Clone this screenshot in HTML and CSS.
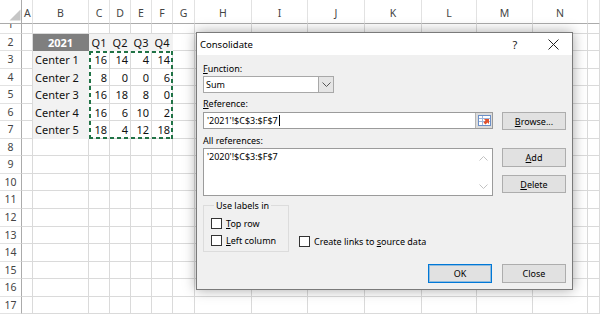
FILE: index.html
```html
<!DOCTYPE html>
<html lang="en">
<head>
    <meta charset="UTF-8">
    <meta name="viewport" content="width=device-width, initial-scale=1.0">
    <title>Consolidate</title>
    <link rel="stylesheet" href="styles.css">
</head>
<body>
    <div class="sheet" id="sheet">
        <!-- Cells are added by JavaScript -->
    </div>

    <div class="dialog">
        <div class="dlg-title">
            <span class="dlg-name">Consolidate</span>
            <span class="tb-btn">?</span>
            <span class="tb-btn">
                <svg width="11" height="11" viewBox="0 0 11 11"><path d="M0.5 0.5L10.5 10.5M10.5 0.5L0.5 10.5" stroke="#222" stroke-width="1" fill="none"/></svg>
            </span>
        </div>

        <div class="dlg-body">
            <div class="lbl lbl-first"><u>F</u>unction:</div>
            <div class="select">
                <span class="select-val">Sum</span>
                <span class="select-btn">
                    <svg width="9" height="5" viewBox="0 0 9 5"><path d="M0.5 0.5L4.5 4.5L8.5 0.5" stroke="#555" fill="none"/></svg>
                </span>
            </div>

            <div class="lbl lbl-ref"><u>R</u>eference:</div>
            <div class="dlg-row">
                <div class="input">
                    <span>'2021'!$C$3:$F$7</span><span class="caret"></span>
                    <span class="picker">
                        <svg width="13" height="11" viewBox="0 0 13 11">
                            <rect x="0.5" y="0.5" width="12" height="10" fill="#fff" stroke="#6b8fc7"/>
                            <path d="M1 3.5H12M1 6.5H12M4.5 1V10" stroke="#9db5dc" fill="none"/>
                            <path d="M6 4H11V9L9.5 7.5L7.5 9.5L5.5 7.5L7.5 5.5Z" fill="#e0502c"/>
                        </svg>
                    </span>
                </div>
                <button class="btn btn-browse"><u>B</u>rowse...</button>
            </div>

            <div class="lbl lbl-all">All references:</div>
            <div class="dlg-row row-refs">
                <div class="listbox">
                    <span class="list-item">'2020'!$C$3:$F$7</span>
                    <div class="scroll">
                        <svg width="9" height="5" viewBox="0 0 9 5"><path d="M0.5 4.5L4.5 0.5L8.5 4.5" stroke="#c2c2c2" fill="none"/></svg>
                        <svg width="9" height="5" viewBox="0 0 9 5"><path d="M0.5 0.5L4.5 4.5L8.5 0.5" stroke="#c2c2c2" fill="none"/></svg>
                    </div>
                </div>
                <div class="btn-col">
                    <button class="btn"><u>A</u>dd</button>
                    <button class="btn btn-delete"><u>D</u>elete</button>
                </div>
            </div>

            <div class="dlg-row row-opts">
                <fieldset class="group">
                    <legend>Use labels in</legend>
                    <label class="check"><span class="box"></span><span><u>T</u>op row</span></label>
                    <label class="check"><span class="box"></span><span><u>L</u>eft column</span></label>
                </fieldset>
                <label class="check check-links"><span class="box"></span><span>Create links to <u>s</u>ource data</span></label>
            </div>

            <div class="dlg-row row-foot">
                <button class="btn btn-ok">OK</button>
                <button class="btn">Close</button>
            </div>
        </div>
    </div>

    <script>
        // Sheet data, columns A..F
        const sheetData = {
            2: ['', '2021', 'Q1', 'Q2', 'Q3', 'Q4'],
            3: ['', 'Center 1', 16, 14, 4, 14],
            4: ['', 'Center 2', 8, 0, 0, 6],
            5: ['', 'Center 3', 16, 18, 8, 0],
            6: ['', 'Center 4', 16, 6, 10, 2],
            7: ['', 'Center 5', 18, 4, 12, 18]
        };
        const colNames = ['A', 'B', 'C', 'D', 'E', 'F', 'G', 'H', 'I', 'J', 'K', 'L', 'M', 'N', ''];

        const sheet = document.getElementById('sheet');

        function addCell(text, cls) {
            const cell = document.createElement('div');
            cell.className = 'cell ' + cls;
            const inner = document.createElement('span');
            inner.textContent = text;
            cell.appendChild(inner);
            sheet.appendChild(cell);
            return cell;
        }

        // Corner with select-all triangle
        const corner = document.createElement('div');
        corner.className = 'cell corner';
        corner.innerHTML = '<svg width="22" height="24" viewBox="0 0 22 24"><polygon points="20.5,9.5 20.5,20.5 9.5,20.5" fill="#c6c6c6"/></svg>';
        sheet.appendChild(corner);

        colNames.forEach(name => addCell(name, 'col-hd'));

        for (let r = 1; r <= 17; r++) {
            addCell(r, 'row-hd' + (r === 1 ? ' r1' : ''));
            colNames.forEach((name, c) => {
                const row = sheetData[r];
                const text = row && c < row.length ? row[c] : '';
                let cls = r === 1 ? 'r1' : '';
                if (r === 2 && c === 1) cls = 'yr';
                else if (r === 2 && c >= 2 && c <= 5) cls = 'q';
                else if (row && c === 1) cls = 'lab';
                else if (row && c >= 2 && c <= 5) cls = 'num';
                addCell(text, cls);
            });
        }

        // Copy marquee round C3:F7, drawn over the cells
        const ants = document.createElement('div');
        ants.className = 'ants';
        sheet.appendChild(ants);
    </script>
</body>
</html>
```

FILE: styles.css
```css
* {
    box-sizing: border-box;
    margin: 0;
    padding: 0;
}

body {
    position: relative;
    width: 600px;
    height: 315px;
    overflow: hidden;
    background-color: #fff;
    font-family: 'Noto Sans', sans-serif;
}

/* Spreadsheet */

.sheet {
    position: relative;
    display: grid;
    grid-template-columns: 22px 11px 56px 21px 21px 21px 21px 22px 57px 56px 57px 57px 55px 56px 55px 1fr;
    grid-template-rows: 24px 9.5px repeat(16, 17.55px);
    height: 315px;
}

.cell {
    border-right: 1px solid #dadada;
    border-bottom: 1px solid #dadada;
    padding: 0 2px;
    font-size: 11px;
    line-height: 17px;
    color: #111;
    white-space: nowrap;
    overflow: hidden;
}

.corner {
    padding: 0;
    border-right: 1px solid #ababab;
    border-bottom: 1px solid #ababab;
}

.corner svg {
    display: block;
}

.col-hd {
    padding-top: 5px;
    text-align: center;
    font-size: 10.5px;
    color: #444;
    border-bottom: 1px solid #ababab;
    border-right-color: #e2e2e2;
}

.row-hd {
    text-align: center;
    font-size: 10.5px;
    color: #444;
    border-right: 1px solid #ababab;
    border-bottom-color: #e2e2e2;
}

.r1 span {
    display: block;
    margin-top: -8px;
}

.yr {
    background-color: #7f7f7f;
    border-color: #7f7f7f;
    color: #fff;
    font-weight: bold;
    text-align: center;
}

.q {
    background-color: #f2f2f2;
    border-color: #f2f2f2;
    text-align: center;
    padding: 0;
}

.lab {
    background-color: #f2f2f2;
    border-color: #f2f2f2;
}

.num {
    text-align: right;
}

.ants {
    position: absolute;
    left: 89px;
    top: 51px;
    width: 84px;
    height: 88px;
    background:
        linear-gradient(90deg, #217346 60%, transparent 0) top left / 7px 2px repeat-x,
        linear-gradient(90deg, #217346 60%, transparent 0) bottom left / 7px 2px repeat-x,
        linear-gradient(#217346 60%, transparent 0) top left / 2px 7px repeat-y,
        linear-gradient(#217346 60%, transparent 0) top right / 2px 7px repeat-y;
}

/* Dialog */

.dialog {
    position: absolute;
    left: 196px;
    top: 32px;
    width: 377px;
    height: 258px;
    display: flex;
    flex-direction: column;
    background-color: #f0f0f0;
    border: 1px solid #7a7a7a;
    box-shadow: 0 0 12px rgba(0, 0, 0, 0.35);
    font-size: 9px;
    color: #000;
}

.dlg-title {
    display: flex;
    align-items: center;
    height: 22px;
    padding-left: 3px;
    background-color: #fff;
    font-size: 9.5px;
}

.dlg-name {
    flex: 1;
}

.tb-btn {
    display: flex;
    justify-content: center;
    align-items: center;
    width: 38px;
    height: 22px;
    font-size: 11px;
    color: #222;
}

.dlg-body {
    flex: 1;
    padding: 0 6px;
}

.lbl {
    line-height: 15px;
}

.lbl-first {
    margin-top: 6px;
    height: 15px;
}

.lbl-ref {
    height: 19px;
    padding-top: 3px;
}

.lbl-all {
    height: 18px;
    padding-top: 4px;
    line-height: 14px;
}

.select {
    display: flex;
    align-items: center;
    width: 131px;
    height: 17px;
    background-color: #fff;
    border: 1px solid #a8a8a8;
}

.select-val {
    flex: 1;
    padding-left: 2px;
}

.select-btn {
    display: flex;
    justify-content: center;
    align-items: center;
    width: 15px;
    height: 100%;
    background-color: #e5e5e5;
    border-left: 1px solid #a8a8a8;
}

.dlg-row {
    display: flex;
    gap: 9px;
}

.input {
    display: flex;
    align-items: center;
    width: 290px;
    height: 17px;
    padding-left: 3px;
    background-color: #fff;
    border: 1px solid #9b9b9b;
}

.caret {
    width: 1px;
    height: 11px;
    margin-left: 1px;
    background-color: #000;
}

.picker {
    display: flex;
    justify-content: center;
    align-items: center;
    width: 17px;
    height: 15px;
    margin-left: auto;
    background-color: #dcdcdc;
    border-left: 1px solid #b5b5b5;
}

.btn {
    width: 64px;
    height: 19px;
    background-color: #e1e1e1;
    border: 1px solid #adadad;
    font-family: inherit;
    font-size: 9px;
    color: #000;
}

.btn-browse {
    height: 18px;
}

.row-refs {
    height: 48px;
}

.listbox {
    display: flex;
    width: 290px;
    height: 48px;
    background-color: #fff;
    border: 1px solid #9b9b9b;
}

.list-item {
    flex: 1;
    padding: 1px 3px;
}

.scroll {
    display: flex;
    flex-direction: column;
    justify-content: space-between;
    align-items: center;
    width: 17px;
    padding: 7px 0 6px;
}

.scroll svg {
    display: block;
}

.btn-col {
    display: flex;
    flex-direction: column;
    gap: 8px;
}

.btn-delete {
    height: 18px;
}

.row-opts {
    align-items: flex-end;
    gap: 10px;
    margin-top: 3px;
}

.group {
    width: 86px;
    height: 53px;
    padding: 3px 0 0 7px;
    border: 1px solid #dcdcdc;
}

.group legend {
    margin-left: 3px;
    padding: 0 2px;
    line-height: 13px;
}

.check {
    display: flex;
    align-items: center;
    gap: 4px;
    height: 17px;
}

.box {
    width: 11px;
    height: 11px;
    background-color: #fff;
    border: 1px solid #333;
}

.check-links {
    margin-bottom: 2px;
}

.row-foot {
    justify-content: flex-end;
    gap: 10px;
    margin-top: 12px;
}

.btn-ok {
    border-color: #0078d7;
    box-shadow: inset 0 0 0 1px rgba(0, 120, 215, 0.35);
}
```
